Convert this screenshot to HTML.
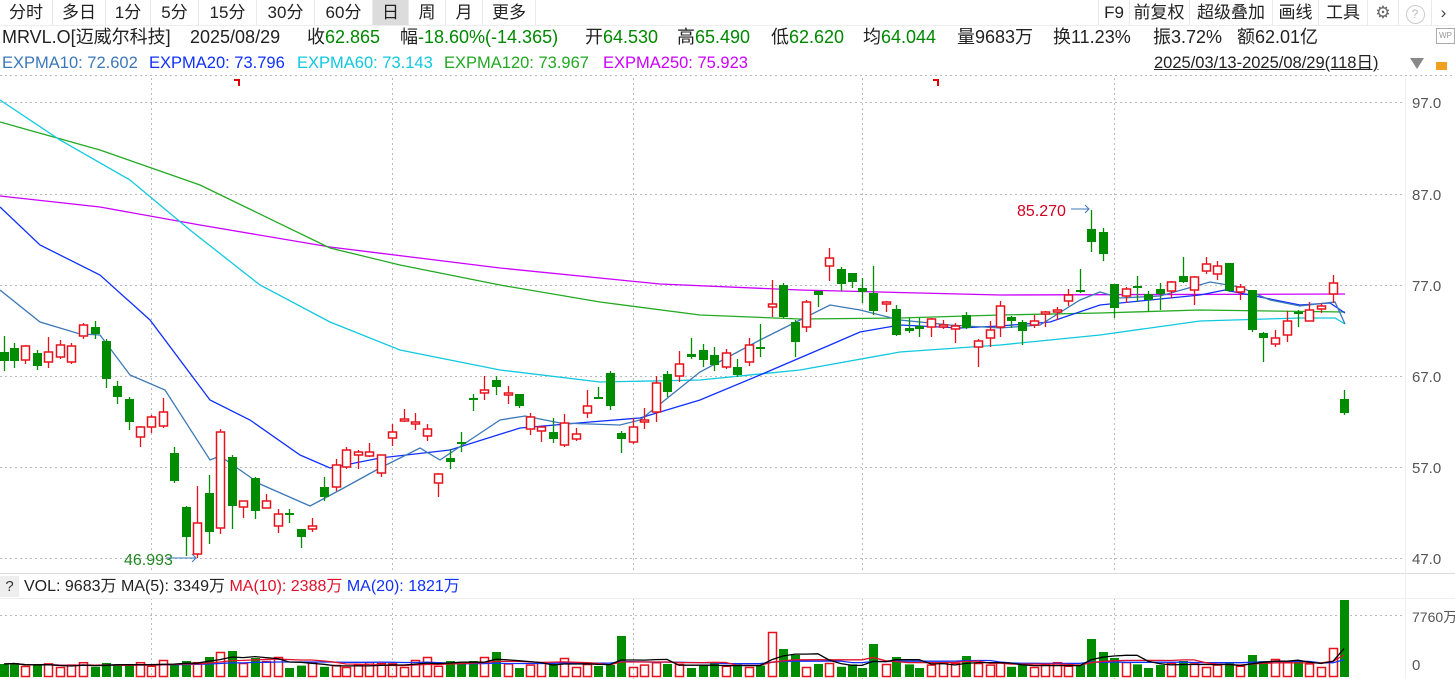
<!DOCTYPE html>
<html><head><meta charset="utf-8"><style>
body{margin:0;width:1455px;height:679px;overflow:hidden;background:#fff;font-family:"Liberation Sans","Noto Sans CJK SC",sans-serif;position:relative}
.t{position:absolute;white-space:nowrap}
.r2{position:absolute;top:26px;font-size:18px;line-height:22px;color:#222;white-space:nowrap}
.r3{position:absolute;top:52px;font-size:16.5px;line-height:22px;white-space:nowrap}
.g{color:#080}
.tab{position:absolute;top:0;height:25px;line-height:25px;font-size:17px;color:#222;text-align:center;border-right:1px solid #e8e8e8}
</style></head><body>
<div style="position:absolute;left:0;top:25px;width:1455px;height:1px;background:#eee"></div>
<div class="tab" style="left:0;width:52px">分时</div>
<div class="tab" style="left:53px;width:52px">多日</div>
<div class="tab" style="left:106px;width:44px">1分</div>
<div class="tab" style="left:151px;width:47px">5分</div>
<div class="tab" style="left:199px;width:57px">15分</div>
<div class="tab" style="left:257px;width:57px">30分</div>
<div class="tab" style="left:315px;width:57px">60分</div>
<div class="tab" style="left:373px;width:35px;background:#dcdcdc">日</div>
<div class="tab" style="left:409px;width:36px">周</div>
<div class="tab" style="left:446px;width:36px">月</div>
<div class="tab" style="left:483px;width:52px">更多</div>
<div class="tab" style="left:1098px;width:30px;border-left:1px solid #e8e8e8">F9</div>
<div class="tab" style="left:1129px;width:60px">前复权</div>
<div class="tab" style="left:1190px;width:82px">超级叠加</div>
<div class="tab" style="left:1273px;width:45px">画线</div>
<div class="tab" style="left:1319px;width:48px">工具</div>
<div class="tab" style="left:1368px;width:30px;color:#666">⚙</div>
<div class="tab" style="left:1399px;width:32px"><span style="display:inline-block;width:17px;height:17px;border:1px solid #ccc;border-radius:50%;line-height:17px;font-size:12px;color:#bbb">?</span></div>
<div class="tab" style="left:1432px;width:23px;border:none;color:#444">›</div>

<div class="r2" style="left:2px">MRVL.O[迈威尔科技]</div>
<div class="r2" style="left:190px">2025/08/29</div>
<div class="r2" style="left:307px">收<span class="g">62.865</span></div>
<div class="r2" style="left:400px">幅<span class="g">-18.60%(-14.365)</span></div>
<div class="r2" style="left:585px">开<span class="g">64.530</span></div>
<div class="r2" style="left:677px">高<span class="g">65.490</span></div>
<div class="r2" style="left:771px">低<span class="g">62.620</span></div>
<div class="r2" style="left:863px">均<span class="g">64.044</span></div>
<div class="r2" style="left:957px">量9683万</div>
<div class="r2" style="left:1053px">换11.23%</div>
<div class="r2" style="left:1153px">振3.72%</div>
<div class="r2" style="left:1237px">额62.01亿</div>
<div class="t" style="left:1436px;top:28px;width:17px;height:14px;border:1px solid #aaa;font-size:8px;color:#999;text-align:center;line-height:14px">WP</div>
<div class="r3" style="left:2px;color:#3c78b8">EXPMA10: 72.602</div>
<div class="r3" style="left:149px;color:#1030ff">EXPMA20: 73.796</div>
<div class="r3" style="left:297px;color:#10c8e0">EXPMA60: 73.143</div>
<div class="r3" style="left:444px;color:#22a822">EXPMA120: 73.967</div>
<div class="r3" style="left:603px;color:#cc00ff">EXPMA250: 75.923</div>
<div class="r3" style="left:1154px;color:#222;text-decoration:underline">2025/03/13-2025/08/29(118日)</div>
<div class="t" style="left:1410px;top:58px;width:0;height:0;border-left:7px solid transparent;border-right:7px solid transparent;border-top:11px solid #888"></div>
<div class="t" style="left:1436px;top:62px;width:11px;height:8px;background:#f0a020"></div>

<svg style="position:absolute;left:0;top:0" width="1455" height="679" id="s">
<g stroke="#bbb" stroke-dasharray="2,3" stroke-width="1">
<line x1="0" y1="102.5" x2="1405" y2="102.5"/><line x1="0" y1="194.5" x2="1405" y2="194.5"/><line x1="0" y1="285.5" x2="1405" y2="285.5"/><line x1="0" y1="376.5" x2="1405" y2="376.5"/><line x1="0" y1="467.5" x2="1405" y2="467.5"/><line x1="0" y1="558.5" x2="1405" y2="558.5"/>
<line x1="0" y1="615.5" x2="1405" y2="615.5"/>
<line x1="151.5" y1="78" x2="151.5" y2="572"/><line x1="392.5" y1="78" x2="392.5" y2="572"/><line x1="633.5" y1="78" x2="633.5" y2="572"/><line x1="862.5" y1="78" x2="862.5" y2="572"/><line x1="1114.5" y1="78" x2="1114.5" y2="572"/>
<line x1="151.5" y1="598" x2="151.5" y2="679"/><line x1="392.5" y1="598" x2="392.5" y2="679"/><line x1="633.5" y1="598" x2="633.5" y2="679"/><line x1="862.5" y1="598" x2="862.5" y2="679"/><line x1="1114.5" y1="598" x2="1114.5" y2="679"/>
<line x1="0" y1="75.5" x2="1455" y2="75.5"/>
</g>
<line x1="0" y1="573.5" x2="1455" y2="573.5" stroke="#ddd"/>
<line x1="0" y1="598.5" x2="1455" y2="598.5" stroke="#eee"/>
<line x1="1405.5" y1="78" x2="1405.5" y2="679" stroke="#eee"/>
<path d="M234 80h5v6" stroke="#d00" fill="none" stroke-width="2"/><path d="M933 80h5v6" stroke="#d00" fill="none" stroke-width="2"/>
<g font-size="15" fill="#555" font-family="Liberation Sans">
<text x="1412" y="108">97.0</text><text x="1412" y="200">87.0</text><text x="1412" y="291">77.0</text><text x="1412" y="382">67.0</text><text x="1412" y="473">57.0</text><text x="1412" y="564">47.0</text>
<text x="1412" y="622" font-size="14" font-family="Liberation Sans, Noto Sans CJK SC">7760万</text><text x="1412" y="670">0</text>
</g>
<text x="1017" y="216" font-size="16" fill="#d00020">85.270</text>
<path d="M1071 209H1089M1085 205l4 4-4 4" stroke="#3c78b8" fill="none"/>
<text x="124" y="565" font-size="16" fill="#228822">46.993</text>
<path d="M166 558H196M192 554l4 4-4 4" stroke="#3c78b8" fill="none"/>
<g fill="none" stroke-width="1.3">
<polyline stroke="#cc00ff" points="0,196 100,207 200,225 330,247 500,268 660,284 800,290 1000,295 1345,294"/>
<polyline stroke="#22aa22" points="0,122 100,150 200,185 330,248 400,265 500,285 600,302 700,315 800,319 900,318 1000,315 1100,313 1200,310 1345,312"/>
<polyline stroke="#10c8e0" points="0,100 60,140 130,180 190,230 260,285 330,322 400,350 500,370 600,382 700,380 800,370 900,352 1000,345 1100,335 1200,321 1300,318 1335,318 1345,324"/>
<polyline stroke="#1030ff" points="0,207 40,245 100,275 150,320 210,400 250,420 300,455 330,468 380,458 450,450 520,428 590,422 640,418 700,400 760,375 830,345 860,332 900,325 960,328 1000,326 1050,322 1100,305 1150,300 1200,295 1225,290 1260,297 1300,305 1330,303 1345,313"/>
<polyline stroke="#3c78b8" points="0,290 40,322 80,334 100,335 130,375 165,390 210,460 220,456 260,484 310,506 340,490 380,468 420,448 440,460 470,440 500,420 525,416 560,423 620,425 640,420 700,372 760,340 800,320 830,305 860,310 900,320 950,325 1000,328 1040,325 1080,300 1100,292 1120,298 1160,296 1210,282 1240,287 1270,300 1300,306 1335,302 1345,324"/>
</g>
<g id="c"></g><g id="v"></g>
</svg>
<div class="t" style="left:0;top:576px;width:19px;height:21px;background:#eee;font-size:15px;line-height:21px;text-align:center;color:#333">?</div>
<div class="t" style="left:24px;top:576px;font-size:16px;line-height:21px;color:#222">VOL: 9683万 MA(5): 3349万 <span style="color:#e0102a">MA(10): 2388万</span> <span style="color:#1030ff">MA(20): 1821万</span></div>
<script>
var C=[[4,'g',352,361,336,371],[14,'g',348,361,343,368],[25,'r',346,360,345,364],[37,'g',353,366,350,370],[48,'r',352,362,337,368],[60,'r',345,357,340,359],[71,'r',346,362,343,364],[83,'r',325,336,323,339],[95,'g',327,334,321,339],[106,'g',341,379,339,388],[117,'g',386,397,381,404],[129,'g',399,422,397,430],[140,'r',427,437,426,447],[151,'r',417,427,415,433],[163,'r',412,426,398,428],[174,'g',453,481,447,483],[186,'g',507,537,506,556],[197,'r',523,554,486,558],[209,'g',493,532,475,544],[220,'r',432,528,429,534],[232,'g',457,506,455,529],[243,'r',501,507,501,518],[255,'g',478,511,477,519],[266,'r',501,508,494,508],[278,'r',514,526,509,533],[289,'g',513,515,509,523],[301,'g',529,537,529,548],[312,'r',526,529,518,532],[324,'g',487,497,477,501],[336,'r',465,487,459,491],[346,'r',450,467,447,469],[358,'r',452,455,450,469],[369,'r',452,456,443,457],[381,'r',455,473,455,477],[392,'r',432,438,424,446],[404,'r',419,420,409,422],[415,'r',422,424,413,430],[427,'r',429,436,424,441],[438,'r',474,483,473,497],[450,'g',458,462,449,469],[461,'g',442,443,432,452],[473,'g',398,399,394,411],[484,'r',390,393,376,400],[496,'g',380,387,376,395],[508,'r',393,394,386,404],[519,'g',394,406,394,408],[530,'r',417,429,413,435],[541,'r',427,431,427,442],[553,'g',432,439,418,443],[564,'r',423,445,414,447],[576,'r',434,439,428,441],[587,'r',406,413,390,418],[598,'g',397,398,387,398],[610,'g',373,406,371,410],[621,'g',433,439,431,453],[633,'r',427,442,418,444],[644,'r',420,422,408,429],[656,'r',383,412,376,422],[667,'g',374,392,371,397],[679,'r',364,376,351,382],[691,'g',354,357,338,359],[703,'g',350,360,344,367],[714,'g',355,365,347,371],[726,'r',353,367,349,369],[737,'g',367,375,359,377],[749,'r',345,362,338,366],[760,'g',347,348,324,357],[772,'r',304,307,280,317],[783,'g',285,317,283,318],[795,'g',322,342,320,357],[806,'r',302,327,300,332],[818,'g',291,295,291,307],[829,'r',258,266,248,281],[841,'g',269,284,267,291],[852,'g',273,282,273,288],[862,'g',288,292,278,303],[873,'g',293,311,266,315],[886,'r',302,304,301,312],[896,'g',309,335,305,336],[909,'g',328,331,318,333],[919,'g',326,329,318,337],[931,'r',319,327,318,337],[943,'r',325,326,320,329],[955,'r',326,329,323,343],[966,'g',315,328,312,329],[978,'r',341,347,339,367],[990,'r',330,338,321,347],[1000,'r',306,327,301,337],[1011,'g',317,321,316,328],[1022,'g',322,331,320,345],[1034,'r',321,325,315,328],[1045,'r',312,314,311,327],[1057,'r',310,312,307,320],[1068,'r',295,301,289,306],[1080,'g',290,291,269,293],[1091,'g',229,242,210,252],[1103,'g',232,254,228,261],[1114,'g',284,308,284,318],[1126,'r',289,296,287,303],[1137,'g',286,288,276,302],[1148,'g',294,300,291,312],[1160,'g',289,294,283,310],[1171,'r',282,291,281,298],[1183,'g',276,282,257,283],[1194,'r',277,290,276,305],[1206,'r',264,271,257,274],[1217,'r',266,274,261,280],[1229,'g',263,291,263,292],[1240,'r',287,292,284,300],[1252,'g',290,330,290,332],[1263,'g',333,338,332,362],[1275,'r',338,344,330,347],[1287,'r',321,335,311,342],[1298,'g',312,313,310,327],[1309,'r',310,321,302,321],[1321,'r',306,309,303,313],[1333,'r',283,294,275,303],[1344,'g',399,413,390,415]];
var OV={4:13,14:14,25:10,37:12,106:14,117:12,163:16,174:13,186:16,209:20,220:24,232:26,243:13,255:19,266:15,278:19,336:11,381:13,415:16,427:19,437:33,450:16,461:13,473:16,484:19,496:25,519:9,553:13,564:18,587:12,598:11,610:12,621:41,667:13,679:12,702:15,714:14,772:44,783:28,795:22,818:13,829:13,873:33,886:12,896:20,955:13,966:21,978:13,1091:38,1103:25,1114:19,1126:14,1160:12,1171:13,1183:16,1252:22,1263:16,1275:17,1298:15,1333:28,1344:77};
var H=C.map(function(c,i){return OV[c[0]]||(9+((i*7)%5)*1.2);});
var s='',v='';
C.forEach(function(c,i){var x=c[0],col=c[1]=='r'?'#e8101a':'#008c00';
s+='<line x1="'+(x+.5)+'" y1="'+c[4]+'" x2="'+(x+.5)+'" y2="'+c[5]+'" stroke="'+col+'" stroke-width="1.3"/>';
var h=Math.max(c[3]-c[2],2);
if(c[1]=='r')s+='<rect x="'+(x-3.5)+'" y="'+c[2]+'" width="8" height="'+h+'" fill="#fff" stroke="'+col+'" stroke-width="1.5"/>';
else s+='<rect x="'+(x-4)+'" y="'+c[2]+'" width="9" height="'+h+'" fill="'+col+'"/>';
var vh=H[i];
if(c[1]=='r')v+='<rect x="'+(x-3.5)+'" y="'+(676.5-vh)+'" width="8" height="'+vh+'" fill="none" stroke="'+col+'" stroke-width="1.5"/>';
else v+='<rect x="'+(x-4)+'" y="'+(677-vh)+'" width="9" height="'+vh+'" fill="'+col+'"/>';
});
function ma(n){var p=[];for(var i=0;i<C.length;i++){var a=0,k=0;for(var j=Math.max(0,i-n+1);j<=i;j++){a+=H[j];k++;}p.push(C[i][0]+','+(677-a/k).toFixed(1));}return p.join(' ');}
v+='<polyline fill="none" stroke="#1030ff" stroke-width="1.3" points="'+ma(20)+'"/><polyline fill="none" stroke="#e0102a" stroke-width="1.3" points="'+ma(10)+'"/><polyline fill="none" stroke="#000" stroke-width="1.3" points="'+ma(5)+'"/>';
document.getElementById('c').innerHTML=s;document.getElementById('v').innerHTML=v;
</script>
</body></html>
